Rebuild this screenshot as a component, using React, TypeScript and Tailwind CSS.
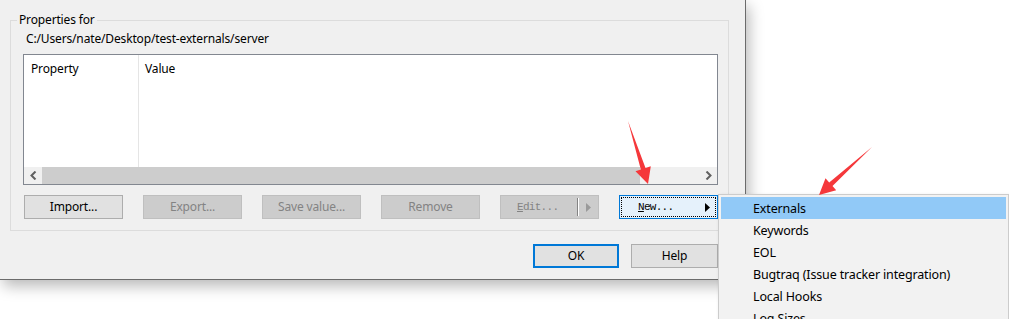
import React from "react";

const ui = "font-['Segoe_UI','Noto_Sans','Open_Sans',sans-serif] text-[12px] leading-[16px] tracking-[-0.15px]";
const mono = "font-['Liberation_Mono','DejaVu_Sans_Mono',monospace] text-[11px] leading-[12px] tracking-[-0.7px]";

function Btn({
  label,
  disabled,
  className = "",
}: {
  label: string;
  disabled?: boolean;
  className?: string;
}) {
  return (
    <div
      className={`flex h-[24px] w-[99px] items-center justify-center border ${
        disabled
          ? "border-[#bfbfbf] bg-[#cccccc] text-[#838383]"
          : "border-[#adadad] bg-[#e1e1e1] text-black"
      } ${className}`}
    >
      {label}
    </div>
  );
}

function Caret({ color }: { color: string }) {
  return (
    <svg width="5" height="9" viewBox="0 0 5 9">
      <path d="M0 0 L5 4.5 L0 9 Z" fill={color} />
    </svg>
  );
}

function RedArrow({ x1, y1, x2, y2 }: { x1: number; y1: number; x2: number; y2: number }) {
  // thin tail widening into a head at the tip
  const dx = x2 - x1;
  const dy = y2 - y1;
  const len = Math.hypot(dx, dy);
  const ux = dx / len;
  const uy = dy / len;
  const nx = -uy;
  const ny = ux;
  const head = 16;
  const bx = x2 - ux * head;
  const by = y2 - uy * head;
  const p = (x: number, y: number) => `${x.toFixed(1)},${y.toFixed(1)}`;
  const pts = [
    p(x1, y1),
    p(bx + nx * 2.5, by + ny * 2.5),
    p(bx + nx * 8, by + ny * 8),
    p(x2, y2),
    p(bx - nx * 8, by - ny * 8),
    p(bx - nx * 2.5, by - ny * 2.5),
  ].join(" ");
  return <polygon points={pts} fill="#f5383b" />;
}

export default function App() {
  const menu = ["Externals", "Keywords", "EOL", "Bugtraq (Issue tracker integration)", "Local Hooks", "Log Sizes"];
  return (
    <div className={`relative h-[319px] w-[1009px] overflow-hidden bg-white ${ui}`}>
      {/* dialog */}
      <div className="h-[280px] w-[746px] border-r border-b border-[#6b6b6b] bg-[#f0f0f0] pl-[10px] pt-[12px] shadow-[3px_6px_14px_rgba(0,0,0,0.28)]">
        <fieldset className="w-[719px] border border-[#dcdcdc] pb-[11px] pl-[12px] pt-[3px]">
          <legend className="-ml-[6px] px-[2px] text-black">Properties for</legend>
          <div className="pl-[3px] text-black">C:/Users/nate/Desktop/test-externals/server</div>

          {/* property list */}
          <div className="mt-[7px] flex h-[131px] w-[695px] flex-col border border-[#828790] bg-white">
            <div className="flex flex-1">
              <div className="w-[115px] border-r border-[#e5e5e5] pl-[7px] pt-[6px]">Property</div>
              <div className="pl-[6px] pt-[6px]">Value</div>
            </div>
            <div className="flex h-[17px] items-stretch">
              <div className="flex w-[18px] items-center justify-center bg-[#f0f0f0] text-[#606060]">
                <svg width="7" height="9" viewBox="0 0 7 9">
                  <path d="M5.5 0.5 L1.5 4.5 L5.5 8.5" stroke="#606060" strokeWidth="2" fill="none" />
                </svg>
              </div>
              <div className="w-[598px] bg-[#cdcdcd]" />
              <div className="flex flex-1 items-center justify-end bg-[#f0f0f0] pr-[5px]">
                <svg width="7" height="9" viewBox="0 0 7 9">
                  <path d="M1.5 0.5 L5.5 4.5 L1.5 8.5" stroke="#606060" strokeWidth="2" fill="none" />
                </svg>
              </div>
            </div>
          </div>

          {/* buttons */}
          <div className="mt-[10px] flex w-[695px] gap-[20px] pl-[1px]">
            <Btn label="Import..." />
            <Btn label="Export..." disabled />
            <Btn label="Save value..." disabled />
            <Btn label="Remove" disabled />
            <div className="flex h-[24px] w-[99px] items-center border border-[#bfbfbf] bg-[#cccccc] text-[#838383]">
              <div className={`flex flex-1 justify-start pl-[16px] ${mono}`}>
                <span>
                  <span className="underline">E</span>dit...
                </span>
              </div>
              <div className="h-[18px] w-[2px] border-l border-[#838383] bg-white" />
              <div className="flex w-[19px] justify-center">
                <Caret color="#9a9a9a" />
              </div>
            </div>
            <div className="flex h-[24px] w-[99px] border border-[#0078d7] bg-[#e5f1fb] p-[1px]">
              <div className="flex flex-1 items-center border border-dotted border-black text-black">
                <div className={`flex flex-1 justify-start pl-[16px] ${mono}`}>
                  <span>
                    <span className="underline">N</span>ew...
                  </span>
                </div>
                <div className="flex w-[16px] justify-center">
                  <Caret color="#000000" />
                </div>
              </div>
            </div>
          </div>
        </fieldset>

        <div className="mt-[13px] flex w-[708px] justify-end gap-[12px]">
          <div className="flex h-[24px] w-[86px] items-center justify-center border-2 border-[#0078d7] bg-[#e1e1e1]">OK</div>
          <div className="flex h-[24px] w-[87px] items-center justify-center border border-[#adadad] bg-[#e1e1e1]">Help</div>
        </div>
      </div>

      {/* popup menu */}
      <div className="absolute left-[718px] top-[194px] w-[291px] border border-[#cccccc] bg-[#f2f2f2] p-[2px] shadow-[2px_2px_4px_rgba(0,0,0,0.2)]">
        {menu.map((m, i) => (
          <div
            key={m}
            className={`flex h-[22px] items-center pl-[32px] text-[12.5px] leading-[15px] text-black ${
              i === 0 ? "bg-[#91c9f7]" : ""
            }`}
          >
            {m}
          </div>
        ))}
      </div>

      {/* annotation arrows */}
      <svg className="pointer-events-none absolute left-0 top-0" width="1009" height="319">
        <RedArrow x1={628} y1={121} x2={648} y2={184} />
        <RedArrow x1={872} y1={147} x2={819} y2={195} />
      </svg>
    </div>
  );
}
